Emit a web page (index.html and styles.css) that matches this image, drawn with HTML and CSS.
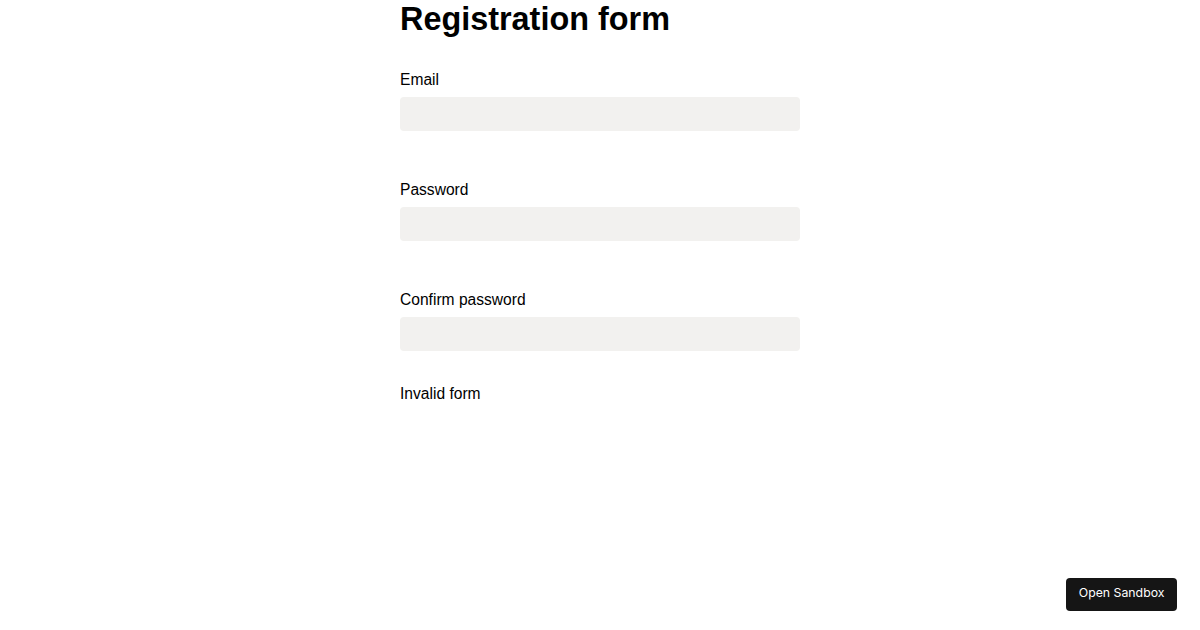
FILE: index.html
```html
<!DOCTYPE html>
<html>
<head>
<meta charset="utf-8">
<link rel="stylesheet" href="styles.css">
</head>
<body>
<main class="page">
  <h1 class="title">Registration form</h1>
  <form class="form">
    <div class="field">
      <label class="label">Email</label>
      <input class="input" type="email">
    </div>
    <div class="field">
      <label class="label">Password</label>
      <input class="input" type="password">
    </div>
    <div class="field">
      <label class="label">Confirm password</label>
      <input class="input" type="password">
    </div>
    <p class="status">Invalid form</p>
  </form>
</main>
<a class="sandbox">Open Sandbox</a>
</body>
</html>
```
FILE: styles.css
```css
html, body {
  margin: 0;
  padding: 0;
  background: #fff;
  font-family: "Liberation Sans", Arial, sans-serif;
  color: #000;
}
.page {
  width: 400px;
  margin: 0 auto;
}
.title {
  margin: 0;
  font-size: 32.4px;
  line-height: 38px;
  font-weight: 700;
}
.form {
  margin-top: 32px;
  display: flex;
  flex-direction: column;
}
.field {
  display: flex;
  flex-direction: column;
  margin-bottom: 49px;
}
.field:last-of-type {
  margin-bottom: 33px;
}
.label {
  font-size: 15.6px;
  line-height: 20px;
  margin-bottom: 7px;
}
.input {
  height: 34px;
  box-sizing: border-box;
  border: none;
  border-radius: 4px;
  background: #f2f1ef;
  margin: 0;
}
.status {
  margin: 0;
  font-size: 15.6px;
  line-height: 20px;
}
.sandbox {
  position: fixed;
  right: 23px;
  bottom: 19px;
  background: #151515;
  color: #fff;
  font-family: Inter, "Liberation Sans", sans-serif;
  font-size: 12.3px;
  line-height: 30px;
  padding: 0 12.5px 3px;
  border-radius: 4px;
}
```
